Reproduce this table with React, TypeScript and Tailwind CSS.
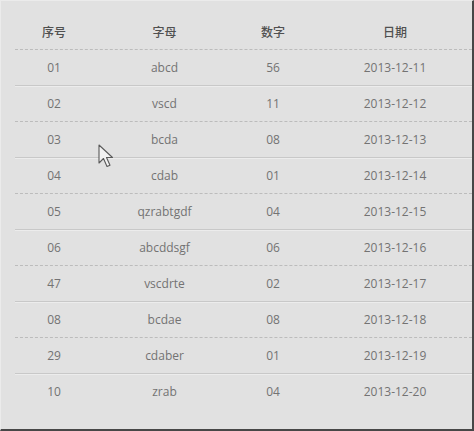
import React from 'react';

const rows = [
  ['01', 'abcd', '56', '2013-12-11'],
  ['02', 'vscd', '11', '2013-12-12'],
  ['03', 'bcda', '08', '2013-12-13'],
  ['04', 'cdab', '01', '2013-12-14'],
  ['05', 'qzrabtgdf', '04', '2013-12-15'],
  ['06', 'abcddsgf', '06', '2013-12-16'],
  ['47', 'vscdrte', '02', '2013-12-17'],
  ['08', 'bcdae', '08', '2013-12-18'],
  ['29', 'cdaber', '01', '2013-12-19'],
  ['10', 'zrab', '04', '2013-12-20'],
];

const headers = ['序号', '字母', '数字', '日期'];

// Arrow cursor that was captured in the screenshot
const Cursor = () => (
  <svg className="absolute left-[97px] top-[143px]" width="16" height="24" viewBox="0 0 16 24">
    <path d="M1 1 L1 19 L5.5 14.5 L9 22.5 L12 21.2 L8.5 13.5 L14.5 13.5 Z" fill="#f2f2f2" stroke="#5a5a5a" strokeWidth="1.1" strokeLinejoin="round" />
  </svg>
);

export default function App() {
  return (
    <div className="relative w-[474px] h-[431px] overflow-hidden bg-[#e1e1e1] border-t border-l border-[#ebebeb] border-r-2 border-r-[#474747] border-b-2 border-b-[#474747] font-['Open_Sans','Noto_Sans_CJK_SC',sans-serif]">
      <div className="pl-[14px] pt-[14px]">
        <div className="grid grid-cols-[78px_143px_74px_170px] h-[35px] items-center border-b border-dashed border-[#bcbcbc] text-[12px] font-medium text-[#505050] font-['Noto_Sans_CJK_SC',sans-serif]">
          {headers.map((h) => (
            <div key={h} className="text-center">{h}</div>
          ))}
        </div>
        {rows.map((r, i) => (
          <div
            key={i}
            className={
              'grid grid-cols-[78px_143px_74px_170px] h-[36px] items-center text-[12px] text-[#737373] ' +
              (i === rows.length - 1
                ? 'border-b border-transparent'
                : i % 2 === 0
                ? 'border-b border-[#c8c8c8] shadow-[0_1px_0_#ececec]'
                : 'border-b border-dashed border-[#bcbcbc]')
            }
          >
            {r.map((c, j) => (
              <div key={j} className="text-center">{c}</div>
            ))}
          </div>
        ))}
      </div>
      <Cursor />
    </div>
  );
}
